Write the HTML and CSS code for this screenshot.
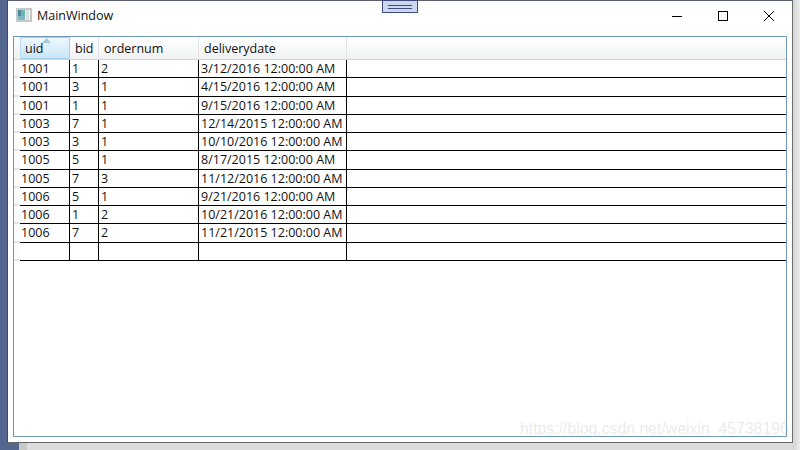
FILE: index.html
```html
<!DOCTYPE html>
<html lang="en">
<head>
<meta charset="utf-8">
<title>MainWindow</title>
<link rel="stylesheet" href="styles.css">
</head>
<body>
<div class="desktop">
  <div class="side"></div>
  <div class="notch"></div>
  <div class="window">
    <div class="titlebar">
      <svg class="appicon" width="16" height="14" viewBox="0 0 16 14">
        <rect x="1" y="1" width="14" height="12" fill="#f2f5f5" stroke="#c4c8c8" stroke-width="2"/>
        <rect x="2" y="2" width="7" height="10" fill="#69b5a8"/>
        <rect x="2" y="2" width="3" height="10" fill="#4c8aa0"/>
        <rect x="2" y="8" width="7" height="4" fill="#7fb7c4"/>
        <rect x="10" y="2" width="3" height="10" fill="#d9e2e2"/>
      </svg>
      <span class="title">MainWindow</span>
      <div class="controls">
        <svg class="ctl" width="46" height="30" viewBox="0 0 46 30"><path d="M18 15.5H28" stroke="#000" fill="none"/></svg>
        <svg class="ctl" width="46" height="30" viewBox="0 0 46 30"><rect x="18.5" y="10.5" width="9" height="9" stroke="#000" fill="none"/></svg>
        <svg class="ctl" width="46" height="30" viewBox="0 0 46 30"><path d="M18 10L28 20M28 10L18 20" stroke="#000" fill="none"/></svg>
      </div>
    </div>
    <div class="grid">
      <div class="rowheads">
        <div class="corner"></div>
        <div class="rowhead"></div><div class="rowhead"></div><div class="rowhead"></div><div class="rowhead"></div>
        <div class="rowhead"></div><div class="rowhead"></div><div class="rowhead"></div><div class="rowhead"></div>
        <div class="rowhead"></div><div class="rowhead"></div><div class="rowhead"></div>
      </div>
      <div class="table">
        <div class="hrow">
          <div class="hcell c1 sorted">uid<svg class="sort" width="9" height="5" viewBox="0 0 9 5"><path d="M4.5 0L9 5H0Z" fill="#a9c6d8"/></svg></div>
          <div class="hcell c2">bid</div>
          <div class="hcell c3">ordernum</div>
          <div class="hcell c4">deliverydate</div>
          <div class="hcell c5"></div>
        </div>
        <div class="row"><div class="cell c1">1001</div><div class="cell c2">1</div><div class="cell c3">2</div><div class="cell c4">3/12/2016 12:00:00 AM</div><div class="cell c5"></div></div>
        <div class="row"><div class="cell c1">1001</div><div class="cell c2">3</div><div class="cell c3">1</div><div class="cell c4">4/15/2016 12:00:00 AM</div><div class="cell c5"></div></div>
        <div class="row"><div class="cell c1">1001</div><div class="cell c2">1</div><div class="cell c3">1</div><div class="cell c4">9/15/2016 12:00:00 AM</div><div class="cell c5"></div></div>
        <div class="row"><div class="cell c1">1003</div><div class="cell c2">7</div><div class="cell c3">1</div><div class="cell c4">12/14/2015 12:00:00 AM</div><div class="cell c5"></div></div>
        <div class="row"><div class="cell c1">1003</div><div class="cell c2">3</div><div class="cell c3">1</div><div class="cell c4">10/10/2016 12:00:00 AM</div><div class="cell c5"></div></div>
        <div class="row"><div class="cell c1">1005</div><div class="cell c2">5</div><div class="cell c3">1</div><div class="cell c4">8/17/2015 12:00:00 AM</div><div class="cell c5"></div></div>
        <div class="row"><div class="cell c1">1005</div><div class="cell c2">7</div><div class="cell c3">3</div><div class="cell c4">11/12/2016 12:00:00 AM</div><div class="cell c5"></div></div>
        <div class="row"><div class="cell c1">1006</div><div class="cell c2">5</div><div class="cell c3">1</div><div class="cell c4">9/21/2016 12:00:00 AM</div><div class="cell c5"></div></div>
        <div class="row"><div class="cell c1">1006</div><div class="cell c2">1</div><div class="cell c3">2</div><div class="cell c4">10/21/2016 12:00:00 AM</div><div class="cell c5"></div></div>
        <div class="row"><div class="cell c1">1006</div><div class="cell c2">7</div><div class="cell c3">2</div><div class="cell c4">11/21/2015 12:00:00 AM</div><div class="cell c5"></div></div>
        <div class="row"><div class="cell c1"></div><div class="cell c2"></div><div class="cell c3"></div><div class="cell c4"></div><div class="cell c5"></div></div>
      </div>
    </div>
  </div>
  <div class="handle"><span class="handle-lines"></span></div>
  <div class="watermark">https://blog.csdn.net/weixin_45738196</div>
</div>
</body>
</html>
```
FILE: styles.css
```css
* { box-sizing: border-box; }
html, body { margin: 0; padding: 0; }
body { width: 800px; height: 450px; overflow: hidden; font-family: "Open Sans", "Noto Sans", sans-serif; }
.desktop { position: relative; width: 800px; height: 450px; display: flex; align-items: flex-start; background: linear-gradient(90deg, #c8c8c8 0, #c8c8c8 27px, #dcdcdc 27px, #dcdcdc 792px, #d4d4d4 793px, #ececec 800px); }
.side { position: absolute; left: 0; top: 0; width: 8px; height: 100%; background: #55668f; }
.notch { position: absolute; left: 8px; top: 443px; width: 11px; height: 7px; background: #55668f; }
.window { position: relative; margin-left: 7px; width: 786px; height: 443px; background: #fff; border-top: 1px solid #5b5f72; border-right: 1px solid #6e6e6e; border-bottom: 1px solid #666; border-left: 1px solid #43486a; display: flex; flex-direction: column; padding: 0 5px 5px 5px; }
.titlebar { height: 35px; display: flex; align-items: center; flex: none; padding-left: 3px; padding-bottom: 7px; }
.appicon { flex: none; }
.title { font-size: 12.5px; color: #111; margin-left: 5px; }
.controls { margin-left: auto; display: flex; margin-right: -5px; margin-top: 2px; }
.ctl { display: block; }
.grid { flex: 1; border: 1px solid #6f97bb; display: flex; background: #fff; }
.rowheads { width: 6px; flex: none; }
.corner { height: 23.1px; background: linear-gradient(#fdfdfd, #eef0f2); border-bottom: 1px solid #d8d8d8; }
.rowhead { height: 18.25px; background: #fbfbfc; border-bottom: 2px solid #e4e7ea; }
.table { flex: 1; min-width: 0; }
.hrow { display: grid; grid-template-columns: 50px 29px 100px 148px 1fr; height: 23.1px; background: linear-gradient(#fdfdfd 0, #f9fafa 45%, #f0f1f3 100%); border-bottom: 1px solid #d5d5d5; }
.row { display: grid; grid-template-columns: 50px 29px 100px 148px 1fr; height: 18.25px; border-bottom: 1px solid #000; }
.hcell { position: relative; font-size: 12.5px; color: #111; padding: 3px 0 0 5px; border-right: 1px solid #e4e5e6; line-height: 17px; }
.hcell.c5 { border-right: 0; }
.sorted { background: linear-gradient(#eef8fe, #c9e6f7 100%); border: 1px solid #a4d0ec; border-left-color: #b8dcf2; padding: 2px 0 0 4px; }
.sort { position: absolute; left: 21px; top: 0; }
.cell { font-size: 12.5px; color: #111; padding: 1px 0 0 2px; border-right: 1px solid #000; line-height: 16px; white-space: nowrap; overflow: hidden; }
.cell.c1 { padding-left: 1px; }
.cell.c5 { border-right: 0; }
.handle { position: absolute; left: 382px; top: 0; width: 36px; height: 13px; background: #ccd6ee; border: 1px solid #3c4a7c; display: flex; align-items: center; justify-content: center; }
.handle-lines { display: block; width: 24px; height: 4px; border-top: 1px solid #3c4a7c; border-bottom: 1px solid #3c4a7c; }
.watermark { position: absolute; left: 520px; top: 420px; font-family: "Liberation Sans", sans-serif; font-size: 15.8px; color: rgba(190,190,190,0.32); white-space: nowrap; }
```
